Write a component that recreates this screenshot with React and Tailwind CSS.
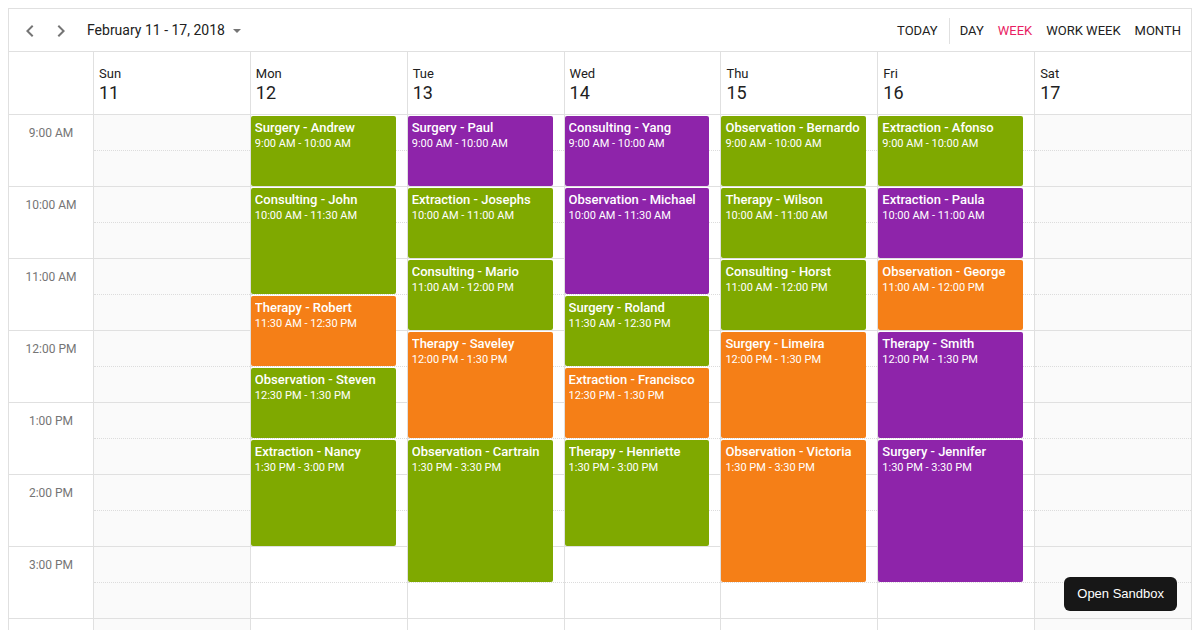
import React from 'react';

const GREEN = 'bg-[#7fa900]';
const PURPLE = 'bg-[#8e24aa]';
const ORANGE = 'bg-[#f57f17]';

const days = [
    { name: 'Sun', date: 11, weekend: true },
    { name: 'Mon', date: 12 },
    { name: 'Tue', date: 13 },
    { name: 'Wed', date: 14 },
    { name: 'Thu', date: 15 },
    { name: 'Fri', date: 16 },
    { name: 'Sat', date: 17, weekend: true }
];

// last row is cut off by the window, its label isn't shown
const hours = ['9:00 AM', '10:00 AM', '11:00 AM', '12:00 PM', '1:00 PM', '2:00 PM', '3:00 PM', ''];

// start / end in hours, 24h clock
const appointments = [
    { day: 1, start: 9, end: 10, title: 'Surgery - Andrew', time: '9:00 AM - 10:00 AM', color: GREEN },
    { day: 1, start: 10, end: 11.5, title: 'Consulting - John', time: '10:00 AM - 11:30 AM', color: GREEN },
    { day: 1, start: 11.5, end: 12.5, title: 'Therapy - Robert', time: '11:30 AM - 12:30 PM', color: ORANGE },
    { day: 1, start: 12.5, end: 13.5, title: 'Observation - Steven', time: '12:30 PM - 1:30 PM', color: GREEN },
    { day: 1, start: 13.5, end: 15, title: 'Extraction - Nancy', time: '1:30 PM - 3:00 PM', color: GREEN },

    { day: 2, start: 9, end: 10, title: 'Surgery - Paul', time: '9:00 AM - 10:00 AM', color: PURPLE },
    { day: 2, start: 10, end: 11, title: 'Extraction - Josephs', time: '10:00 AM - 11:00 AM', color: GREEN },
    { day: 2, start: 11, end: 12, title: 'Consulting - Mario', time: '11:00 AM - 12:00 PM', color: GREEN },
    { day: 2, start: 12, end: 13.5, title: 'Therapy - Saveley', time: '12:00 PM - 1:30 PM', color: ORANGE },
    { day: 2, start: 13.5, end: 15.5, title: 'Observation - Cartrain', time: '1:30 PM - 3:30 PM', color: GREEN },

    { day: 3, start: 9, end: 10, title: 'Consulting - Yang', time: '9:00 AM - 10:00 AM', color: PURPLE },
    { day: 3, start: 10, end: 11.5, title: 'Observation - Michael', time: '10:00 AM - 11:30 AM', color: PURPLE },
    { day: 3, start: 11.5, end: 12.5, title: 'Surgery - Roland', time: '11:30 AM - 12:30 PM', color: GREEN },
    { day: 3, start: 12.5, end: 13.5, title: 'Extraction - Francisco', time: '12:30 PM - 1:30 PM', color: ORANGE },
    { day: 3, start: 13.5, end: 15, title: 'Therapy - Henriette', time: '1:30 PM - 3:00 PM', color: GREEN },

    { day: 4, start: 9, end: 10, title: 'Observation - Bernardo', time: '9:00 AM - 10:00 AM', color: GREEN },
    { day: 4, start: 10, end: 11, title: 'Therapy - Wilson', time: '10:00 AM - 11:00 AM', color: GREEN },
    { day: 4, start: 11, end: 12, title: 'Consulting - Horst', time: '11:00 AM - 12:00 PM', color: GREEN },
    { day: 4, start: 12, end: 13.5, title: 'Surgery - Limeira', time: '12:00 PM - 1:30 PM', color: ORANGE },
    { day: 4, start: 13.5, end: 15.5, title: 'Observation - Victoria', time: '1:30 PM - 3:30 PM', color: ORANGE },

    { day: 5, start: 9, end: 10, title: 'Extraction - Afonso', time: '9:00 AM - 10:00 AM', color: GREEN },
    { day: 5, start: 10, end: 11, title: 'Extraction - Paula', time: '10:00 AM - 11:00 AM', color: PURPLE },
    { day: 5, start: 11, end: 12, title: 'Observation - George', time: '11:00 AM - 12:00 PM', color: ORANGE },
    { day: 5, start: 12, end: 13.5, title: 'Therapy - Smith', time: '12:00 PM - 1:30 PM', color: PURPLE },
    { day: 5, start: 13.5, end: 15.5, title: 'Surgery - Jennifer', time: '1:30 PM - 3:30 PM', color: PURPLE }
];

const HOUR = 72;

const ChevronLeft = () => (
    <svg viewBox="0 0 24 24" className="size-6 fill-[#757575]">
        <path d="M15.41 7.41L14 6l-6 6 6 6 1.41-1.41L10.83 12z" />
    </svg>
);

const ChevronRight = () => (
    <svg viewBox="0 0 24 24" className="size-6 fill-[#757575]">
        <path d="M10 6L8.59 7.41 13.17 12l-4.58 4.59L10 18l6-6z" />
    </svg>
);

const Toolbar = () => (
    <div className="flex h-[43px] items-center border-b border-[#e0e0e0] pt-px pr-[10px] pl-[9px]">
        <ChevronLeft />
        <div className="ml-[7px]">
            <ChevronRight />
        </div>
        <span className="ml-[14px] text-[14px] text-[#212121]">February 11 - 17, 2018</span>
        <svg viewBox="0 0 8 4" className="ml-[8px] h-[4px] w-[8px] fill-[#757575]">
            <path d="M0 0h8L4 4z" />
        </svg>
        <div className="ml-auto flex items-center text-[13px] text-[#212121] uppercase">
            <span>Today</span>
            <div className="mr-[10px] ml-[11px] h-[26px] w-px bg-[#e0e0e0]" />
            <div className="flex items-center gap-[14px]">
                <span>Day</span>
                <span className="text-[#e91e63]">Week</span>
                <span>Work Week</span>
                <span>Month</span>
            </div>
        </div>
    </div>
);

const DayHeader = () => (
    <div className="grid h-[63px] grid-cols-[84px_repeat(7,minmax(0,1fr))] border-b border-[#e0e0e0]">
        <div />
        {days.map((d) => (
            <div key={d.name} className="border-l border-[#e0e0e0] pt-[14px] pl-[5px] text-[#212121]">
                <div className="text-[13px] leading-4">{d.name}</div>
                <div className="text-[18px] leading-[22px]">{d.date}</div>
            </div>
        ))}
    </div>
);

const Appointment = ({ a }) => (
    <div
        className={`absolute left-0 right-[11px] overflow-hidden rounded-[2px] px-1 pt-[4px] text-white ${a.color}`}
        style={{ top: (a.start - 9) * HOUR + 1, height: (a.end - a.start) * HOUR - 2 }}
    >
        <div className="truncate text-[13px] leading-4 font-medium">{a.title}</div>
        <div className="truncate text-[11px] leading-4">{a.time}</div>
    </div>
);

const Body = () => (
    <div className="grid grid-cols-[84px_repeat(7,minmax(0,1fr))]">
        <div>
            {hours.map((h, i) => (
                <div key={i} className="h-[72px] border-b border-[#e0e0e0] pt-[10px] text-center text-xs leading-4 text-[#757575]">
                    {h}
                </div>
            ))}
        </div>
        {days.map((d, i) => (
            <div key={d.name} className={`relative border-l border-[#e0e0e0] ${d.weekend ? 'bg-[#fafafa]' : 'bg-white'}`}>
                {hours.map((h, j) => (
                    <div key={j}>
                        <div className="h-[36px] border-b border-dotted border-[#dcdcdc]" />
                        <div className="h-[36px] border-b border-[#e0e0e0]" />
                    </div>
                ))}
                {appointments.filter((a) => a.day === i).map((a) => (
                    <Appointment key={a.title} a={a} />
                ))}
            </div>
        ))}
    </div>
);

export default function App() {
    return (
        <div className="relative h-[630px] w-[1200px] overflow-hidden bg-white px-2 pt-2 font-['Roboto',sans-serif]">
            <div className="border border-[#e0e0e0]">
                <Toolbar />
                <DayHeader />
                <Body />
            </div>
            <button className="absolute right-[23px] bottom-[19px] flex h-[34px] items-center rounded-md bg-[#171717] px-[13px] font-['Liberation_Sans',sans-serif] text-[13px] text-white">
                Open Sandbox
            </button>
        </div>
    );
}
